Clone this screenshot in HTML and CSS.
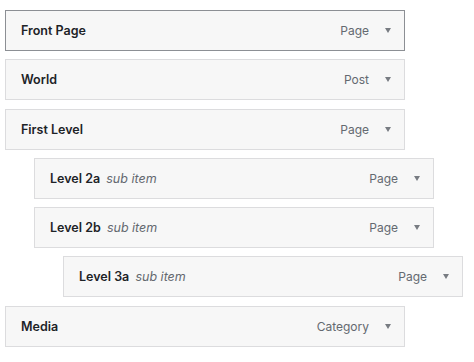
FILE: index.html
```html
<html>
    <head>
        <link rel="stylesheet" href="styles.css">
    </head>
    <body>
        <ul class="menu">
            <li class="item depth-0 active">
                <div class="handle">
                    <span class="title">Front Page</span>
                    <span class="controls">
                        <span class="type">Page</span>
                        <span class="arrow"></span>
                    </span>
                </div>
            </li>
            <li class="item depth-0">
                <div class="handle">
                    <span class="title">World</span>
                    <span class="controls">
                        <span class="type">Post</span>
                        <span class="arrow"></span>
                    </span>
                </div>
            </li>
            <li class="item depth-0">
                <div class="handle">
                    <span class="title">First Level</span>
                    <span class="controls">
                        <span class="type">Page</span>
                        <span class="arrow"></span>
                    </span>
                </div>
            </li>
            <li class="item depth-1">
                <div class="handle">
                    <span class="title">Level 2a <em class="sub">sub item</em></span>
                    <span class="controls">
                        <span class="type">Page</span>
                        <span class="arrow"></span>
                    </span>
                </div>
            </li>
            <li class="item depth-1">
                <div class="handle">
                    <span class="title">Level 2b <em class="sub">sub item</em></span>
                    <span class="controls">
                        <span class="type">Page</span>
                        <span class="arrow"></span>
                    </span>
                </div>
            </li>
            <li class="item depth-2">
                <div class="handle">
                    <span class="title">Level 3a <em class="sub">sub item</em></span>
                    <span class="controls">
                        <span class="type">Page</span>
                        <span class="arrow"></span>
                    </span>
                </div>
            </li>
            <li class="item depth-0">
                <div class="handle">
                    <span class="title">Media</span>
                    <span class="controls">
                        <span class="type">Category</span>
                        <span class="arrow"></span>
                    </span>
                </div>
            </li>
        </ul>
    </body>
</html>
```

FILE: styles.css
```css
body{
    margin:0;
    background-color:#ffffff;
    font-family:Inter, "Noto Sans", sans-serif;
    font-size:12.5px;
}
.menu{
    list-style:none;
    margin:0;
    padding:10px 0 0 5px;
}
.item{
    margin-top:8.3px;
}
.item:first-child{
    margin-top:0;
}
.depth-1{
    margin-left:29px;
}
.depth-2{
    margin-left:58px;
}
.handle{
    box-sizing:border-box;
    width:400px;
    height:41px;
    display:flex;
    align-items:center;
    justify-content:space-between;
    padding:0 13px 0 15px;
    background-color:#f7f7f7;
    border:1px solid #dcdcde;
}
.active .handle{
    border-color:#8c8f94;
}
.title{
    font-weight:600;
    color:#1d2327;
}
.sub{
    font-weight:400;
    color:#646970;
    margin-left:3px;
}
.controls{
    display:flex;
    align-items:center;
    gap:16px;
}
.type{
    font-size:12px;
    color:#646970;
}
.arrow{
    width:0;
    height:0;
    border-left:3.5px solid transparent;
    border-right:3.5px solid transparent;
    border-top:5px solid #787c82;
}
```
